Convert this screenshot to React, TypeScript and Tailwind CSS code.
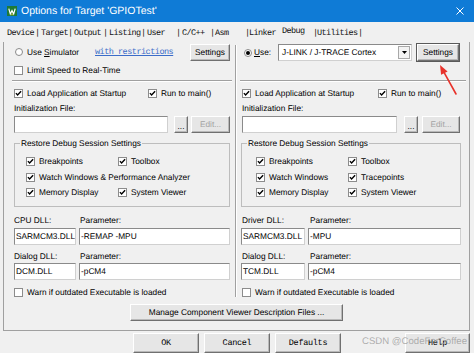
import React from "react";

const mono = "font-['Liberation_Mono','Courier_New',monospace]";

function Check({ on = true }: { on?: boolean }) {
  return (
    <span className="w-[9px] h-[9px] shrink-0 bg-white border border-[#8c8c8c] flex items-center justify-center">
      {on && (
        <svg width="7" height="7" viewBox="0 0 7 7">
          <path d="M0.9 3.1 L2.6 5 L6.1 1.2" fill="none" stroke="#000" strokeWidth="1.4" />
        </svg>
      )}
    </span>
  );
}

function Item({ label, on = true, className = "" }: { label: React.ReactNode; on?: boolean; className?: string }) {
  return (
    <div className={`flex items-center shrink-0 ${className}`}>
      <Check on={on} />
      <span className="ml-[4px] whitespace-nowrap">{label}</span>
    </div>
  );
}

function Radio({ on = false }: { on?: boolean }) {
  return (
    <span className="w-[8px] h-[8px] shrink-0 rounded-full bg-white border border-[#8a8a8a] flex items-center justify-center">
      {on && <span className="w-[4px] h-[4px] rounded-full bg-black" />}
    </span>
  );
}

function Btn({ children, className = "", disabled = false }: { children: React.ReactNode; className?: string; disabled?: boolean }) {
  return (
    <div
      className={`shrink-0 flex items-center justify-center bg-[#e6e6e6] border border-t-white border-l-white border-r-[#707070] border-b-[#707070] shadow-[inset_-1px_-1px_0_#b9b9b9] whitespace-nowrap ${
        disabled ? "text-[#a3a3a3]" : "text-black"
      } ${className}`}
    >
      {children}
    </div>
  );
}

function Field({ value = "", className = "" }: { value?: string; className?: string }) {
  return (
    <div
      className={`shrink-0 h-[17px] bg-white border border-[#d0d0d0] border-t-[#8a8a8a] border-l-[#8a8a8a] flex items-center pl-[1px] whitespace-nowrap overflow-hidden ${className}`}
    >
      {value}
    </div>
  );
}

function Sep({ className = "" }: { className?: string }) {
  return <div className={`h-[2px] border-t border-t-[#a0a0a0] border-b border-b-white ${className}`} />;
}

function Group({ className = "", inner = "", rows }: { className?: string; inner?: string; rows: React.ReactNode }) {
  return (
    <fieldset className={`border border-[#bdbdbd] p-0 m-0 ${className}`}>
      <legend className="ml-[5px] px-[1px] leading-[10px]">Restore Debug Session Settings</legend>
      <div className={`pt-[5px] pb-[6px] ${inner}`}>{rows}</div>
    </fieldset>
  );
}

function TitleBar() {
  return (
    <div className="h-[22px] bg-[#0f7bd6] flex items-center pl-[7px] pr-[10px] text-white">
      <svg width="10" height="10" viewBox="0 0 10 10" className="shrink-0">
        <rect width="10" height="10" fill="#1f7a36" />
        <path d="M1.8 2.6 L3.3 7.8 L5 4.6 L6.7 7.8 L8.2 2.6" fill="none" stroke="#fff" strokeWidth="1.2" />
        <rect x="4.4" y="7.6" width="1.2" height="1.6" fill="#f4d23c" />
      </svg>
      <span className="ml-[4px] text-[10.5px] font-['Liberation_Sans',Arial,sans-serif]">Options for Target 'GPIOTest'</span>
      <svg width="8" height="8" viewBox="0 0 8 8" className="ml-auto">
        <path d="M0.5 0.5 L7.5 7.5 M7.5 0.5 L0.5 7.5" stroke="#fff" strokeWidth="1" />
      </svg>
    </div>
  );
}

function Tabs() {
  return (
    <div className={`h-[20px] flex items-start pt-[7px] pl-[7px] ${mono} text-[8.5px] tracking-[-0.6px] leading-none text-[#111]`}>
      <span className="w-[28px] shrink-0">Device</span>
      <span className="w-[6px] shrink-0">|</span>
      <span className="w-[27px] shrink-0">Target</span>
      <span className="w-[6px] shrink-0">|</span>
      <span className="w-[29px] shrink-0">Output</span>
      <span className="w-[6px] shrink-0">|</span>
      <span className="w-[32px] shrink-0">Listing</span>
      <span className="w-[6px] shrink-0">|</span>
      <span className="w-[29px] shrink-0">User</span>
      <span className="w-[6px] shrink-0">|</span>
      <span className="w-[28px] shrink-0">C/C++</span>
      <span className="w-[5px] shrink-0">|</span>
      <span className="w-[30px] shrink-0">Asm</span>
      <span className="w-[4px] shrink-0">|</span>
      <span className="w-[33px] shrink-0">Linker</span>
      <span className="w-[31px] shrink-0 -mt-[2px]">Debug</span>
      <span className="w-[4px] shrink-0">|</span>
      <span className="w-[41px] shrink-0">Utilities</span>
      <span className="w-[5px] shrink-0">|</span>
    </div>
  );
}

function LeftCol() {
  return (
    <div className="w-[231px] shrink-0 pl-[10px] flex flex-col">
      <div className="mt-[1px] h-[19px] flex items-center">
        <div className="w-[81px] shrink-0 flex items-center">
          <span className="ml-[1px]">
            <Radio />
          </span>
          <span className="ml-[4px] whitespace-nowrap">
            Use <u>S</u>imulator
          </span>
        </div>
        <span className={`w-[95px] shrink-0 ${mono} text-[8.5px] tracking-[-0.5px] text-[#3b6cc9] underline`}>with restrictions</span>
        <Btn className="w-[40px] h-[17px]">Settings</Btn>
      </div>
      <div className="h-[16px] flex items-center">
        <Item label="Limit Speed to Real-Time" on={false} />
      </div>
      <Sep className="mt-[2px] -ml-[2px] w-[220px]" />
      <div className="mt-[3px] h-[16px] flex items-center">
        <Item label="Load Application at Startup" className="w-[134px]" />
        <Item label="Run to main()" />
      </div>
      <div className="h-[14px] flex items-center">Initialization File:</div>
      <div className="mt-[1px] h-[17px] flex">
        <Field className="w-[154px]" />
        <Btn className="ml-[6px] w-[14px] h-[17px] text-[#555] items-end pb-[2px]">...</Btn>
        <Btn className="ml-[3px] w-[39px] h-[17px]" disabled>
          Edit...
        </Btn>
      </div>
      <Group
        className="mt-[5px] w-[216px]"
        inner="pl-[11px]"
        rows={
          <>
            <div className="h-[16px] flex items-center">
              <Item label="Breakpoints" className="w-[92px]" />
              <Item label="Toolbox" />
            </div>
            <div className="h-[16px] flex items-center">
              <Item label="Watch Windows & Performance Analyzer" />
            </div>
            <div className="h-[15px] flex items-center">
              <Item label="Memory Display" className="w-[92px]" />
              <Item label="System Viewer" />
            </div>
          </>
        }
      />
      <div className="mt-[6px] h-[14px] flex items-center">
        <span className="w-[66px] shrink-0">CPU DLL:</span>
        <span>Parameter:</span>
      </div>
      <div className="mt-[1px] flex">
        <Field value="SARMCM3.DLL" className="w-[62px]" />
        <Field value="-REMAP -MPU" className="ml-[3px] w-[151px]" />
      </div>
      <div className="mt-[4px] h-[14px] flex items-center">
        <span className="w-[66px] shrink-0">Dialog DLL:</span>
        <span>Parameter:</span>
      </div>
      <div className="flex">
        <Field value="DCM.DLL" className="w-[62px]" />
        <Field value="-pCM4" className="ml-[3px] w-[151px]" />
      </div>
      <div className="mt-[4px] h-[16px] flex items-center">
        <Item label="Warn if outdated Executable is loaded" on={false} />
      </div>
    </div>
  );
}

function RightCol() {
  return (
    <div className="flex-1 pl-[5px] flex flex-col">
      <div className="mt-[1px] h-[19px] flex items-center">
        <span className="ml-[2px]">
          <Radio on />
        </span>
        <span className="ml-[2px] w-[24px] shrink-0">
          <u>U</u>se:
        </span>
        <div className="w-[134px] h-[17px] shrink-0 bg-white border border-[#d0d0d0] border-t-[#8a8a8a] border-l-[#8a8a8a] flex items-center pl-[3px]">
          <span className="whitespace-nowrap">J-LINK / J-TRACE Cortex</span>
          <div className="ml-auto mr-[1px] w-[12px] h-[13px] bg-[#f3f3f3] border border-[#a8a8a8] flex items-center justify-center">
            <svg width="5" height="3" viewBox="0 0 5 3">
              <path d="M0 0 L5 0 L2.5 3 Z" fill="#000" />
            </svg>
          </div>
        </div>
        <div className="ml-[4px] w-[44px] h-[19px] shrink-0 border border-[#5a5a5a] flex">
          <Btn className="flex-1">Settings</Btn>
        </div>
      </div>
      <div className="h-[16px]" />
      <Sep className="mt-[2px] -ml-[2px] w-[226px]" />
      <div className="mt-[3px] h-[16px] flex items-center">
        <Item label="Load Application at Startup" className="w-[136px]" />
        <Item label="Run to main()" />
      </div>
      <div className="h-[14px] flex items-center">Initialization File:</div>
      <div className="mt-[1px] h-[17px] flex">
        <Field className="w-[155px]" />
        <Btn className="ml-[7px] w-[14px] h-[17px] text-[#555] items-end pb-[2px]">...</Btn>
        <Btn className="ml-[4px] w-[38px] h-[17px]" disabled>
          Edit...
        </Btn>
      </div>
      <Group
        className="mt-[5px] -ml-[1px] w-[220px]"
        inner="pl-[14px]"
        rows={
          <>
            <div className="h-[16px] flex items-center">
              <Item label="Breakpoints" className="w-[92px]" />
              <Item label="Toolbox" />
            </div>
            <div className="h-[16px] flex items-center">
              <Item label="Watch Windows" className="w-[92px]" />
              <Item label="Tracepoints" />
            </div>
            <div className="h-[15px] flex items-center">
              <Item label="Memory Display" className="w-[92px]" />
              <Item label="System Viewer" />
            </div>
          </>
        }
      />
      <div className="mt-[6px] h-[14px] flex items-center">
        <span className="w-[68px] shrink-0">Driver DLL:</span>
        <span>Parameter:</span>
      </div>
      <div className="mt-[1px] flex -ml-[1px]">
        <Field value="SARMCM3.DLL" className="w-[64px]" />
        <Field value="-MPU" className="ml-[3px] w-[153px]" />
      </div>
      <div className="mt-[4px] h-[14px] flex items-center">
        <span className="w-[68px] shrink-0">Dialog DLL:</span>
        <span>Parameter:</span>
      </div>
      <div className="flex -ml-[1px]">
        <Field value="TCM.DLL" className="w-[64px]" />
        <Field value="-pCM4" className="ml-[3px] w-[153px]" />
      </div>
      <div className="mt-[4px] h-[16px] flex items-center">
        <Item label="Warn if outdated Executable is loaded" on={false} />
      </div>
    </div>
  );
}

export default function App() {
  return (
    <div className="w-[474px] h-[353px] overflow-hidden relative bg-[#f0f0f0] text-black text-[8.3px] leading-none font-['Liberation_Sans',Arial,sans-serif] [text-rendering:geometricPrecision]">
      <TitleBar />
      <Tabs />
      <div className="ml-[3px] w-[467px] h-[289px] border-l border-r border-b border-[#a0a0a0] flex flex-col">
        <div className="h-[258px] flex">
          <LeftCol />
          <div className="w-[2px] shrink-0 my-[3px] border-l border-l-[#a0a0a0] border-r border-r-white" />
          <RightCol />
        </div>
        <div className="mt-[4px] flex justify-center">
          <Btn className="w-[213px] h-[17px]">Manage Component Viewer Description Files ...</Btn>
        </div>
      </div>
      <div className={`mt-[2px] pl-[133px] flex ${mono} text-[8.5px] tracking-[-0.3px]`}>
        <Btn className="w-[66px] h-[20px]">OK</Btn>
        <Btn className="ml-[5px] w-[66px] h-[20px]">Cancel</Btn>
        <Btn className="ml-[5px] w-[66px] h-[20px]">Defaults</Btn>
        <Btn className="ml-[64px] w-[65px] h-[20px]">Help</Btn>
      </div>
      <span className="absolute left-[362px] top-[337px] text-[9.6px] text-[#9c9c9c]/80 whitespace-nowrap">CSDN @CodeForCoffee</span>
      <svg className="absolute left-[430px] top-[60px]" width="34" height="40" viewBox="430 60 34 40">
        <path d="M456 94 L444.3 72.9" stroke="#e8322b" strokeWidth="1.6" strokeLinecap="round" />
        <path d="M440 65 L447.6 71.4 L441.1 74.8 Z" fill="#e8322b" />
      </svg>
    </div>
  );
}
